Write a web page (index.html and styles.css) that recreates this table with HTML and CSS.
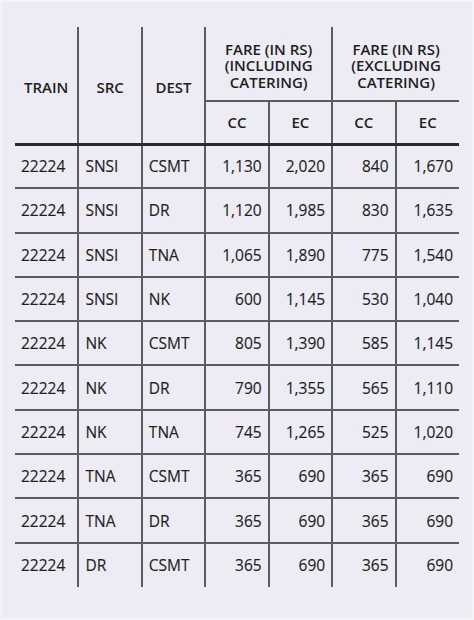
FILE: index.html
```html
<!DOCTYPE html>
<html>
<head>
<meta charset="utf-8">
<link rel="stylesheet" href="styles.css">
</head>
<body>
<div class="page">
  <table class="fares">
    <colgroup>
      <col class="c"><col class="c"><col class="c"><col class="c"><col class="c"><col class="c"><col class="c">
    </colgroup>
    <thead>
      <tr class="h1">
        <th rowspan="2">TRAIN</th>
        <th rowspan="2">SRC</th>
        <th rowspan="2">DEST</th>
        <th colspan="2" class="grp">FARE (IN RS)<br>(INCLUDING<br>CATERING)</th>
        <th colspan="2" class="grp">FARE (IN RS)<br>(EXCLUDING<br>CATERING)</th>
      </tr>
      <tr class="h2">
        <th>CC</th><th>EC</th><th>CC</th><th>EC</th>
      </tr>
    </thead>
    <tbody>
      <tr><td>22224</td><td>SNSI</td><td>CSMT</td><td class="n">1,130</td><td class="n">2,020</td><td class="n">840</td><td class="n">1,670</td></tr>
      <tr><td>22224</td><td>SNSI</td><td>DR</td><td class="n">1,120</td><td class="n">1,985</td><td class="n">830</td><td class="n">1,635</td></tr>
      <tr><td>22224</td><td>SNSI</td><td>TNA</td><td class="n">1,065</td><td class="n">1,890</td><td class="n">775</td><td class="n">1,540</td></tr>
      <tr><td>22224</td><td>SNSI</td><td>NK</td><td class="n">600</td><td class="n">1,145</td><td class="n">530</td><td class="n">1,040</td></tr>
      <tr><td>22224</td><td>NK</td><td>CSMT</td><td class="n">805</td><td class="n">1,390</td><td class="n">585</td><td class="n">1,145</td></tr>
      <tr><td>22224</td><td>NK</td><td>DR</td><td class="n">790</td><td class="n">1,355</td><td class="n">565</td><td class="n">1,110</td></tr>
      <tr><td>22224</td><td>NK</td><td>TNA</td><td class="n">745</td><td class="n">1,265</td><td class="n">525</td><td class="n">1,020</td></tr>
      <tr><td>22224</td><td>TNA</td><td>CSMT</td><td class="n">365</td><td class="n">690</td><td class="n">365</td><td class="n">690</td></tr>
      <tr><td>22224</td><td>TNA</td><td>DR</td><td class="n">365</td><td class="n">690</td><td class="n">365</td><td class="n">690</td></tr>
      <tr><td>22224</td><td>DR</td><td>CSMT</td><td class="n">365</td><td class="n">690</td><td class="n">365</td><td class="n">690</td></tr>
    </tbody>
  </table>
</div>
</body>
</html>
```

FILE: styles.css
```css
html, body {
  margin: 0;
  padding: 0;
  background: #f5f5f9;
}
.page {
  width: 474px;
  height: 620px;
  box-sizing: border-box;
  margin: 0;
  background: #edecf4;
  border: 2px solid #f3f3f8;
  padding: 25px 13px 0 13px;
  font-family: "Open Sans", "Liberation Sans", sans-serif;
  color: #1f1f1f;
}
.fares {
  width: 444px;
  table-layout: fixed;
  border-collapse: collapse;
  border-style: hidden;
  font-size: 15.5px;
}
.fares col.c {
  width: 63.43px;
}
.fares th, .fares td {
  border: 2px solid #5c5c5c;
  padding: 0 6px;
  box-sizing: border-box;
}
.fares th {
  font-weight: 600;
  font-size: 15px;
  text-align: center;
  line-height: 16.5px;
  letter-spacing: 0;
}
.fares .h1 th {
  height: 74px;
  padding-top: 4px;
}
.fares .h1 th.grp {
  padding: 4px 2px 0 2px;
}
.fares .h1 th[rowspan] {
  border-bottom: 3px solid #2a2a2a;
}
.fares .h2 th {
  height: 43px;
  border-bottom: 3px solid #2a2a2a;
}
.fares td {
  height: 44.3px;
  text-align: left;
  font-weight: 400;
  -webkit-text-stroke: 0.15px #1f1f1f;
}
.fares td.n {
  text-align: right;
}
```
